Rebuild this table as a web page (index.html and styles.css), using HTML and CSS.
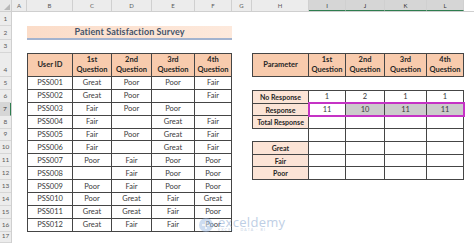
FILE: index.html
```html
<!DOCTYPE html>
<html>
<head>
<meta charset="utf-8">
<link rel="stylesheet" href="styles.css">
</head>
<body>
<div class="sheet">
  <div class="corner"><span class="tri"></span></div>
  <div class="colheads">
    <div class="ch">A</div><div class="ch">B</div><div class="ch">C</div><div class="ch">D</div>
    <div class="ch">E</div><div class="ch">F</div><div class="ch">G</div><div class="ch">H</div>
    <div class="ch sel">I</div><div class="ch sel">J</div><div class="ch sel">K</div><div class="ch sel">L</div>
    <div class="ch end"></div>
  </div>
  <div class="rowheads">
    <div class="rh">1</div><div class="rh">2</div><div class="rh">3</div><div class="rh">4</div>
    <div class="rh">5</div><div class="rh">6</div><div class="rh sel">7</div><div class="rh">8</div>
    <div class="rh">9</div><div class="rh">10</div><div class="rh">11</div><div class="rh">12</div>
    <div class="rh">13</div><div class="rh">14</div><div class="rh">15</div><div class="rh">16</div>
    <div class="rh">17</div>
  </div>
  <div class="cells">
    <div class="title">Patient Satisfaction Survey</div>

    <div class="ltable">
      <div class="hd">User ID</div><div class="hd">1st<br>Question</div><div class="hd">2nd<br>Question</div><div class="hd">3rd<br>Question</div><div class="hd">4th<br>Question</div>
      <div class="c">PSS001</div><div class="c">Great</div><div class="c">Poor</div><div class="c">Poor</div><div class="c">Fair</div>
      <div class="c">PSS002</div><div class="c">Great</div><div class="c">Poor</div><div class="c"></div><div class="c">Fair</div>
      <div class="c">PSS003</div><div class="c">Fair</div><div class="c">Poor</div><div class="c">Poor</div><div class="c"></div>
      <div class="c">PSS004</div><div class="c">Fair</div><div class="c"></div><div class="c">Great</div><div class="c">Fair</div>
      <div class="c">PSS005</div><div class="c">Fair</div><div class="c">Poor</div><div class="c">Great</div><div class="c">Fair</div>
      <div class="c">PSS006</div><div class="c">Fair</div><div class="c"></div><div class="c">Great</div><div class="c">Fair</div>
      <div class="c">PSS007</div><div class="c">Poor</div><div class="c">Fair</div><div class="c">Poor</div><div class="c">Poor</div>
      <div class="c">PSS008</div><div class="c"></div><div class="c">Fair</div><div class="c">Poor</div><div class="c">Poor</div>
      <div class="c">PSS009</div><div class="c">Poor</div><div class="c">Fair</div><div class="c">Poor</div><div class="c">Poor</div>
      <div class="c">PSS010</div><div class="c">Poor</div><div class="c">Great</div><div class="c">Fair</div><div class="c">Great</div>
      <div class="c">PSS011</div><div class="c">Great</div><div class="c">Great</div><div class="c">Fair</div><div class="c">Poor</div>
      <div class="c">PSS012</div><div class="c">Great</div><div class="c">Fair</div><div class="c">Fair</div><div class="c">Poor</div>
    </div>

    <div class="rhead">
      <div class="hd">Parameter</div><div class="hd">1st<br>Question</div><div class="hd">2nd<br>Question</div><div class="hd">3rd<br>Question</div><div class="hd">4th<br>Question</div>
    </div>

    <div class="rbody">
      <div class="c lbl">No Response</div><div class="c">1</div><div class="c">2</div><div class="c">1</div><div class="c">1</div>
      <div class="c lbl">Response</div><div class="c">11</div><div class="c hl">10</div><div class="c hl">11</div><div class="c hl">11</div>
      <div class="c lbl">Total Response</div><div class="c"></div><div class="c"></div><div class="c"></div><div class="c"></div>
      <div class="c gap"></div><div class="c"></div><div class="c"></div><div class="c"></div><div class="c"></div>
      <div class="c lbl">Great</div><div class="c"></div><div class="c"></div><div class="c"></div><div class="c"></div>
      <div class="c lbl">Fair</div><div class="c"></div><div class="c"></div><div class="c"></div><div class="c"></div>
      <div class="c lbl">Poor</div><div class="c"></div><div class="c"></div><div class="c"></div><div class="c"></div>
    </div>

    <div class="selbox"></div>

    <div class="wm">
      <svg class="wm-logo" width="20" height="16" viewBox="0 0 20 16">
        <circle cx="9" cy="8" r="7" fill="#9dbbe3"/>
        <path d="M5 8h8M9 4v8" stroke="#ffffff" stroke-width="2" fill="none" opacity="0.7"/>
      </svg>
      <div class="wm-text">
        <span class="wm-name">exceldemy</span>
        <span class="wm-sub">EXCEL · DATA · BI</span>
      </div>
    </div>
  </div>
</div>
</body>
</html>
```

FILE: styles.css
```css
* { box-sizing: border-box; }
html, body { margin: 0; padding: 0; background: #ffffff; }
body {
  font-family: "Lato", "Liberation Sans", sans-serif;
  color: #2e2e2e;
  overflow: hidden;
}
.sheet {
  width: 474px;
  height: 243px;
  display: grid;
  grid-template-columns: 12px 1fr;
  grid-template-rows: 12px 1fr;
  overflow: hidden;
}
.corner {
  background: #e8e8e8;
  border-right: 1px solid #cfcfcf;
  border-bottom: 1px solid #cfcfcf;
  display: flex;
  align-items: flex-end;
  justify-content: flex-end;
  padding: 0 1px 1px 0;
}
.tri {
  width: 0; height: 0;
  border-left: 6px solid transparent;
  border-bottom: 6px solid #b8b8b8;
}
.colheads {
  display: grid;
  grid-template-columns: 15px 46px 39px 40px 43px 37px 20px 57px 37px 39px 42px 37px 1fr;
  background: #ececec;
  border-bottom: 1px solid #cfcfcf;
}
.ch {
  font-size: 6px;
  color: #5a5a5a;
  display: flex;
  align-items: center;
  justify-content: center;
  border-right: 1px solid #d0d0d0;
}
.ch.sel {
  background: #d6d6d6;
  color: #333;
  border-bottom: 1px solid #2e7d4f;
}
.ch.end { background: #ffffff; border-right: none; }
.rowheads {
  display: grid;
  grid-template-rows: 14px 13.5px 13.5px 24px repeat(12, 12.9px) 1fr;
  background: #ececec;
  border-right: 1px solid #cfcfcf;
}
.rh {
  font-size: 6.5px;
  color: #5a5a5a;
  display: flex;
  align-items: flex-end;
  justify-content: center;
  padding-bottom: 3px;
  border-bottom: 1px solid #d6d6d6;
}
.rh.sel {
  background: #d6d6d6;
  color: #333;
  border-right: 1px solid #2e7d4f;
}
.cells {
  position: relative;
  display: grid;
  grid-template-columns: 15px 46px 39px 40px 43px 37px 20px 57px 37px 39px 42px 37px 1fr;
  grid-template-rows: 14px 13.5px 13.5px 24px repeat(12, 12.9px) 1fr;
}
.title {
  grid-row: 2;
  grid-column: 2 / 7;
  background: linear-gradient(to right, #fbdcc8, #fde9dc);
  border-bottom: 2px solid #a3b3cf;
  color: #44546a;
  font-weight: 700;
  font-size: 9px;
  letter-spacing: 0.1px;
  display: flex;
  align-items: center;
  justify-content: center;
}
.ltable {
  grid-row: 4 / 17;
  grid-column: 2 / 7;
  display: grid;
  grid-template-columns: 45px 39px 40px 43px 37px;
  grid-template-rows: 23px repeat(12, 1fr);
  border-top: 1px solid #454545;
  border-left: 1px solid #454545;
}
.rhead {
  grid-row: 4;
  grid-column: 8 / 13;
  display: grid;
  grid-template-columns: 56px 37px 39px 42px 37px;
  border-top: 1px solid #454545;
  border-left: 1px solid #454545;
}
.rbody {
  grid-row: 6 / 13;
  grid-column: 8 / 13;
  display: grid;
  grid-template-columns: 57px 37px 39px 42px 37px;
  grid-template-rows: repeat(7, 1fr);
  border-top: 1px solid #454545;
}
.hd, .c {
  border-right: 1px solid #454545;
  border-bottom: 1px solid #454545;
  display: flex;
  align-items: center;
  justify-content: center;
  text-align: center;
  font-size: 7.5px;
  white-space: nowrap;
}
.hd {
  background: #f8cbad;
  font-weight: 700;
  color: #262626;
  line-height: 10.5px;
}
.c { color: #3a3a3a; background: #ffffff; }
.rbody .lbl {
  background: #fce4d6;
  font-weight: 700;
  font-size: 7px;
  color: #262626;
  border-left: 1px solid #454545;
}
.rbody .gap { background: #ffffff; }
.rbody .hl { background: #cbcbcb; }
.selbox {
  grid-row: 7;
  grid-column: 9 / 13;
  border: 2px solid #c533c5;
  margin: -1px -1px -1px -1px;
}
.wm {
  position: absolute;
  left: 185px;
  top: 205px;
  display: flex;
  align-items: center;
  gap: 1px;
  opacity: 0.5;
}
.wm-text {
  display: flex;
  flex-direction: column;
  line-height: 0.85;
}
.wm-name {
  font-family: "Open Sans", "Liberation Sans", sans-serif;
  font-size: 13px;
  color: #7f9fcc;
  letter-spacing: 0.3px;
}
.wm-sub {
  font-size: 3.5px;
  line-height: 1;
  color: #8aa4c8;
  letter-spacing: 1.2px;
  margin-top: 1px;
}
```
